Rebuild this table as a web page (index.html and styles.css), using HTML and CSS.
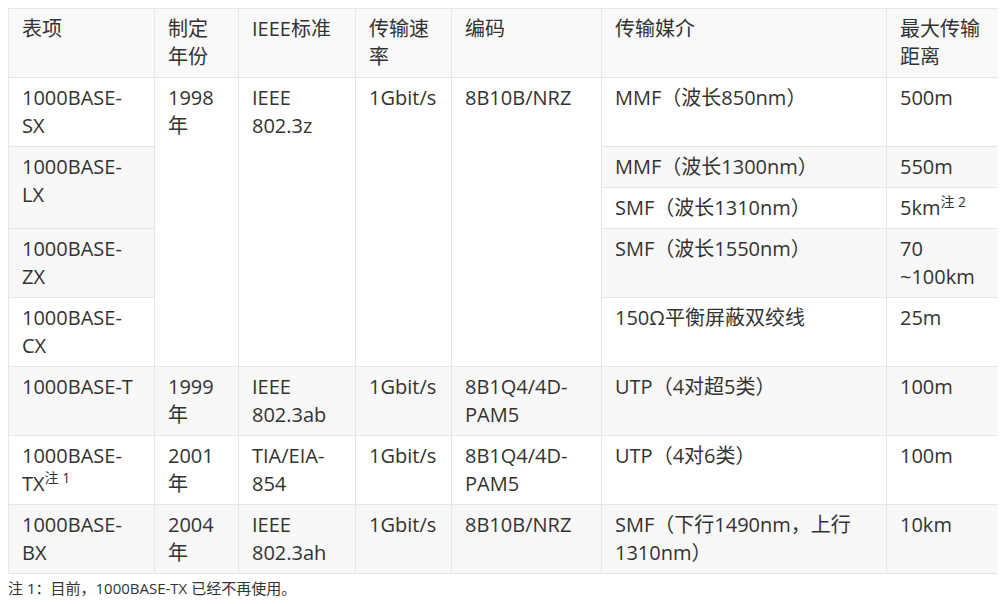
FILE: index.html
```html
<!DOCTYPE html>
<html lang="zh-CN">
<head>
<meta charset="utf-8">
<title>千兆以太网标准</title>
<link rel="stylesheet" href="styles.css">
</head>
<body>
<table class="spec">
  <colgroup>
    <col class="c1"><col class="c2"><col class="c3"><col class="c4"><col class="c5"><col class="c6"><col class="c7">
  </colgroup>
  <thead>
    <tr>
      <th>表项</th>
      <th>制定年份</th>
      <th>IEEE标准</th>
      <th>传输速率</th>
      <th>编码</th>
      <th>传输媒介</th>
      <th>最大传输距离</th>
    </tr>
  </thead>
  <tbody>
    <tr>
      <td>1000BASE-SX</td>
      <td rowspan="5">1998年</td>
      <td rowspan="5">IEEE 802.3z</td>
      <td rowspan="5">1Gbit/s</td>
      <td rowspan="5">8B10B/NRZ</td>
      <td>MMF（波长850nm）</td>
      <td>500m</td>
    </tr>
    <tr>
      <td rowspan="2">1000BASE-LX</td>
      <td>MMF（波长1300nm）</td>
      <td>550m</td>
    </tr>
    <tr>
      <td>SMF（波长1310nm）</td>
      <td>5km<sup class="note">注 2</sup></td>
    </tr>
    <tr>
      <td>1000BASE-ZX</td>
      <td>SMF（波长1550nm）</td>
      <td>70<wbr>~100km</td>
    </tr>
    <tr>
      <td>1000BASE-CX</td>
      <td>150Ω平衡屏蔽双绞线</td>
      <td>25m</td>
    </tr>
    <tr>
      <td>1000BASE-T</td>
      <td>1999年</td>
      <td>IEEE 802.3ab</td>
      <td>1Gbit/s</td>
      <td>8B1Q4/4D-PAM5</td>
      <td>UTP（4对超5类）</td>
      <td>100m</td>
    </tr>
    <tr>
      <td>1000BASE-TX<sup class="note">注 1</sup></td>
      <td>2001年</td>
      <td>TIA/EIA-854</td>
      <td>1Gbit/s</td>
      <td>8B1Q4/4D-PAM5</td>
      <td>UTP（4对6类）</td>
      <td>100m</td>
    </tr>
    <tr>
      <td>1000BASE-BX</td>
      <td>2004年</td>
      <td>IEEE 802.3ah</td>
      <td>1Gbit/s</td>
      <td>8B10B/NRZ</td>
      <td>SMF（下行1490nm，上行1310nm）</td>
      <td>10km</td>
    </tr>
  </tbody>
</table>
<p class="footnote">注 1：目前，1000BASE-TX 已经不再使用。</p>
</body>
</html>
```

FILE: styles.css
```css
html, body {
  background: #ffffff;
}
body {
  margin: 8px;
  font-family: "Open Sans", "Noto Sans CJK SC", sans-serif;
  color: #333333;
}
.spec {
  border-collapse: collapse;
  table-layout: fixed;
  width: 993px;
  font-size: 20px;
  line-height: 28px;
}
.c1 { width: 146px; }
.c2 { width: 84px; }
.c3 { width: 117px; }
.c4 { width: 96px; }
.c5 { width: 150px; }
.c6 { width: 285px; }
.c7 { width: 115px; }
.spec th,
.spec td {
  border: 1px solid #e6e6e6;
  padding: 6px 13px 6px 13px;
  text-align: left;
  vertical-align: top;
  font-weight: normal;
}
.spec thead th {
  background: #f9f9f9;
}
.spec tbody tr:nth-child(even) td {
  background: #f8f8f8;
}
.note {
  font-size: 14px;
  line-height: 0;
  vertical-align: super;
}
.footnote {
  margin: 3px 0 0;
  font-size: 15px;
  line-height: 22px;
}
```
